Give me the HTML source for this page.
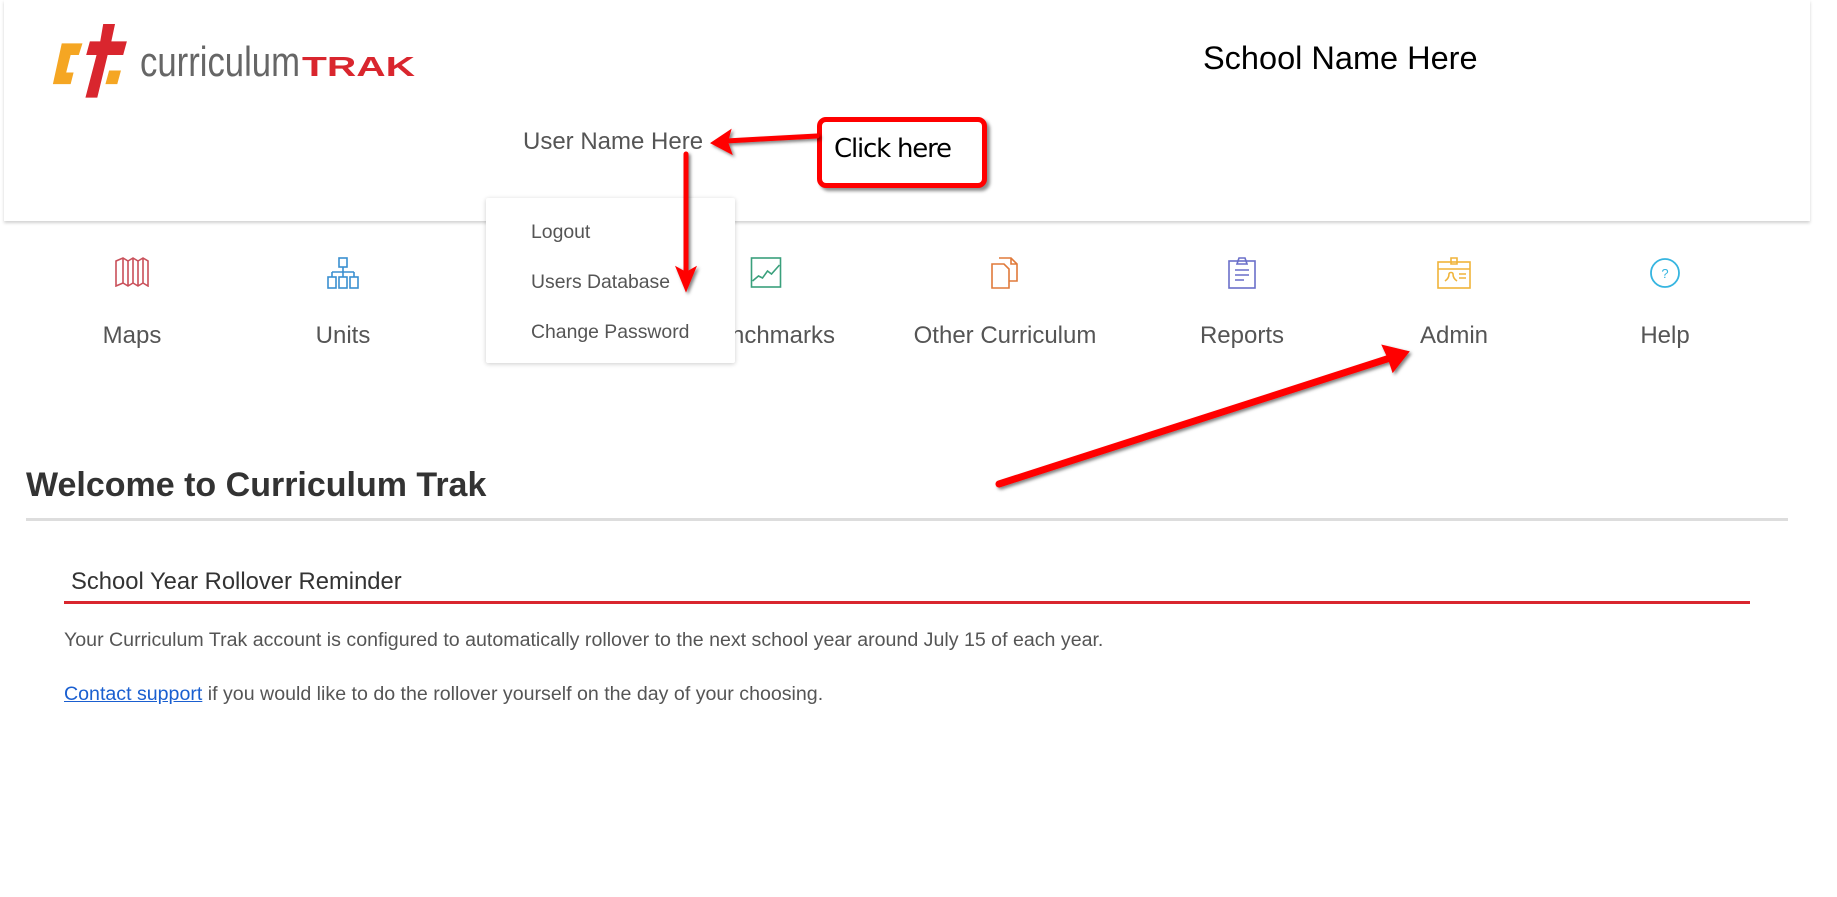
<!DOCTYPE html>
<html><head><meta charset="utf-8"><style>
*{margin:0;padding:0;box-sizing:border-box}
body{width:1837px;height:897px;background:#fff;position:relative;overflow:hidden;font-family:"Liberation Sans",sans-serif;color:#555}
.abs{position:absolute}
.hdr{left:4px;top:0;width:1806px;height:221px;background:#fff;box-shadow:0 2px 3px rgba(0,0,0,.18)}
.nav{top:322px;font-size:24px;color:#555;white-space:nowrap;transform:translateX(-50%);line-height:28px}
.ic{top:257px;transform:translateX(-50%)}
.menu{left:486px;top:198px;width:249px;height:165px;background:#fff;box-shadow:0 1px 5px rgba(0,0,0,.2);border-radius:2px}
.mi{position:absolute;left:45px;font-size:19.4px;color:#555;line-height:22px}
</style></head><body>
<div class="abs hdr"></div>
<svg class="abs" style="left:40px;top:20px" width="390" height="82">
 <g transform="translate(4 2) scale(0.74 0.97)">
 <path d="M24 22 H52 L47 34 H36 L30 52 H40 L36 64 H12 Z" fill="#f5a623"/>
 <path d="M80 2 H96 L91 20 H112 L107 34 H86 L72 78 H56 L71 34 H57 L62 20 H76 Z" fill="#d9262e"/>
 <path d="M88 50 H104 L99 64 H83 Z" fill="#f5a623"/>
 </g>
 <text x="100" y="56" font-size="42" fill="#666" font-family="Liberation Sans" textLength="160" lengthAdjust="spacingAndGlyphs">curriculum</text>
 <text x="262" y="56" font-size="28" fill="#d9262e" font-weight="bold" font-family="Liberation Sans" textLength="113" lengthAdjust="spacingAndGlyphs">TRAK</text>
</svg>
<div class="abs" style="left:1203px;top:39px;font-size:32.5px;color:#000;line-height:38px">School Name Here</div>
<div class="abs" style="left:523px;top:128px;font-size:24px;color:#555;line-height:28px">User Name Here</div>

<svg class="abs ic" style="left:132px" width="34" height="30" viewBox="0 0 34 30" fill="none" stroke="#c9505a" stroke-width="1.6"><path d="M1 4 L8 1 L13 4 L18 1 L23 4 L28 1 L33 4 V29 L28 26 L23 29 L18 26 L13 29 L8 26 L1 29 Z M8 1V26 M13 4V29 M18 1V26 M23 4V29 M28 1V26"/></svg>
<svg class="abs ic" style="left:343px" width="32" height="32" viewBox="0 0 32 32" fill="none" stroke="#3a8fd0" stroke-width="1.6"><rect x="12" y="1" width="8" height="9"/><path d="M16 10V15 M5 15H27 M5 15V20 M16 15V20 M27 15V20"/><rect x="1" y="20" width="8" height="11"/><rect x="12" y="20" width="8" height="11"/><rect x="23" y="20" width="8" height="11"/></svg>
<svg class="abs ic" style="left:766px" width="31" height="31" viewBox="0 0 31 31" fill="none" stroke="#3aa07c" stroke-width="1.6"><rect x="1" y="1" width="29" height="29"/><path d="M2 24 L8 19 L12 21 L17 14 L21 17 L29 8"/></svg>
<svg class="abs ic" style="left:1005px" width="28" height="32" viewBox="0 0 28 32" fill="none" stroke="#e07a3a" stroke-width="1.6"><path d="M8 1H20L26 7V24H18 M1 7H13L18 12V31H1Z M20 1V7H26"/></svg>
<svg class="abs ic" style="left:1242px" width="28" height="32" viewBox="0 0 28 32" fill="none" stroke="#6a6fc9" stroke-width="1.6"><rect x="1" y="4" width="26" height="27"/><path d="M11 1H17L19 7H9Z M7 13H21 M7 18H21 M7 23H16"/></svg>
<svg class="abs ic" style="left:1454px" width="34" height="32" viewBox="0 0 34 32" fill="none" stroke="#f0b43a" stroke-width="1.6"><rect x="1" y="5" width="32" height="26"/><path d="M14 1H20V7H14Z M1 12H33 M8 24 C11 22 12 20 12 17 C12 15 16 15 16 17 C16 20 17 22 20 24 M22 17H29 M22 21H29"/></svg>
<svg class="abs ic" style="left:1665px" width="32" height="32" viewBox="0 0 32 32" fill="none" stroke="#36b5e0" stroke-width="1.8"><circle cx="16" cy="16" r="14"/><text x="16" y="21" font-size="13" fill="#36b5e0" stroke="none" text-anchor="middle" font-family="Liberation Sans">?</text></svg>

<div class="abs nav" style="left:132px">Maps</div>
<div class="abs nav" style="left:343px">Units</div>
<div class="abs" style="right:1002px;top:322px;font-size:24px;line-height:28px;color:#555;white-space:nowrap">Benchmarks</div>
<div class="abs nav" style="left:1005px">Other Curriculum</div>
<div class="abs nav" style="left:1242px">Reports</div>
<div class="abs nav" style="left:1454px">Admin</div>
<div class="abs nav" style="left:1665px">Help</div>

<div class="abs menu">
 <div class="mi" style="top:23px">Logout</div>
 <div class="mi" style="top:73px">Users Database</div>
 <div class="mi" style="top:123px">Change Password</div>
</div>

<div class="abs" style="left:26px;top:466px;font-size:34px;font-weight:bold;color:#333;line-height:38px">Welcome to Curriculum Trak</div>
<div class="abs" style="left:26px;top:518px;width:1762px;height:3px;background:#ddd"></div>
<div class="abs" style="left:71px;top:568px;font-size:23.8px;color:#333;line-height:28px">School Year Rollover Reminder</div>
<div class="abs" style="left:64px;top:601px;width:1686px;height:3px;background:#d9262e"></div>
<div class="abs" style="left:64px;top:628px;font-size:19.6px;color:#555;line-height:24px;white-space:nowrap">Your Curriculum Trak account is configured to automatically rollover to the next school year around July 15 of each year.</div>
<div class="abs" style="left:64px;top:682px;font-size:19.6px;color:#555;line-height:24px;white-space:nowrap"><span style="color:#1a5fd0;text-decoration:underline">Contact support</span> if you would like to do the rollover yourself on the day of your choosing.</div>

<div class="abs" style="left:817px;top:117px;width:170px;height:71px;border:5px solid #f00;border-radius:9px;background:#fff;box-shadow:3px 3px 3px rgba(0,0,0,.45)"></div>
<div class="abs" style="left:834px;top:134px;font-size:26px;color:#000;line-height:30px;font-family:'DejaVu Sans','Liberation Sans',sans-serif;letter-spacing:-1.2px">Click here</div>
<svg class="abs" style="left:0;top:0;overflow:visible" width="1837" height="897">
 <defs><filter id="s"><feDropShadow dx="2" dy="2" stdDeviation="1.5" flood-opacity=".5"/></filter></defs>
 <g filter="url(#s)" fill="#f00" stroke="#f00" stroke-linecap="round">
  <path d="M817 136 L726 141" stroke-width="5" fill="none"/>
  <path d="M712 143 L730 131 L727 142 L731 153 Z" stroke-width="2"/>
  <path d="M686 154 V272" stroke-width="5" fill="none"/>
  <path d="M686 290 L677 268 L686 273 L695 268 Z" stroke-width="2"/>
  <path d="M999 484 L1390 358" stroke-width="7" fill="none"/>
  <path d="M1408 352 L1383 346 L1389 359 L1393 371 Z" stroke-width="2"/>
 </g>
</svg>
</body></html>
